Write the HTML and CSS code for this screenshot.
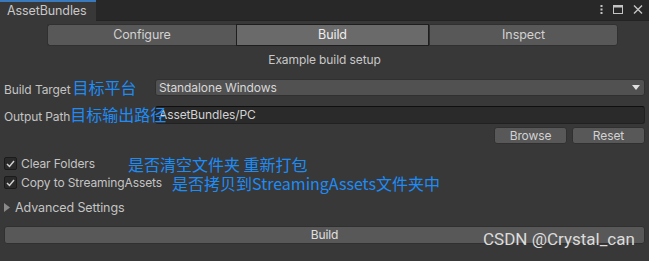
FILE: index.html
```html
<!doctype html>
<html lang="zh-CN">
<head>
	<meta charset="UTF-8">
	<title>AssetBundles</title>
	<link rel="stylesheet" href="styles.css">
</head>
<body>
	<div class="tabbar">
		<div class="tab">AssetBundles</div>
		<div class="winicons">
			<svg width="3" height="9" viewBox="0 0 3 9"><rect x="0.5" y="0" width="2" height="2" fill="#c4c4c4"/><rect x="0.5" y="3.5" width="2" height="2" fill="#c4c4c4"/><rect x="0.5" y="7" width="2" height="2" fill="#c4c4c4"/></svg>
			<svg width="10" height="9" viewBox="0 0 10 9"><rect x="0.5" y="0.5" width="9" height="8" fill="none" stroke="#c4c4c4"/><rect x="0.5" y="0.5" width="9" height="2" fill="#c4c4c4"/></svg>
			<svg width="10" height="9" viewBox="0 0 10 9"><path d="M1 0.5 L9 8.5 M9 0.5 L1 8.5" stroke="#c4c4c4" stroke-width="1.4"/></svg>
		</div>
	</div>

	<div class="panel">
		<div class="toolbar">
			<div class="seg seg-configure">Configure</div>
			<div class="seg seg-build on">Build</div>
			<div class="seg seg-inspect">Inspect</div>
		</div>

		<div class="subtitle">Example build setup</div>

		<div class="row row-target">
			<div class="label">Build Target<span class="note">目标平台</span></div>
			<div class="dropdown">
				Standalone Windows
				<svg class="arrow" width="8" height="5" viewBox="0 0 8 5"><path d="M0 0 H8 L4 5 Z" fill="#e0e0e0"/></svg>
			</div>
		</div>

		<div class="row row-path">
			<div class="label">Output Path<span class="note">目标输出路径</span></div>
			<div class="field">AssetBundles/PC</div>
		</div>

		<div class="row row-btns">
			<div class="btn">Browse</div>
			<div class="btn">Reset</div>
		</div>

		<div class="check first">
			<span class="box"><svg width="9" height="8" viewBox="0 0 9 8"><path d="M1 4 L3.5 6.5 L8 1" fill="none" stroke="#d0d0d0" stroke-width="1.5"/></svg></span>
			<span class="check-label">Clear Folders</span>
			<span class="note note-clear">是否清空文件夹 重新打包</span>
		</div>
		<div class="check">
			<span class="box"><svg width="9" height="8" viewBox="0 0 9 8"><path d="M1 4 L3.5 6.5 L8 1" fill="none" stroke="#d0d0d0" stroke-width="1.5"/></svg></span>
			<span class="check-label">Copy to StreamingAssets</span>
			<span class="note note-copy">是否拷贝到StreamingAssets文件夹中</span>
		</div>

		<div class="foldout">
			<svg width="6" height="9" viewBox="0 0 6 9"><path d="M0 0 L6 4.5 L0 9 Z" fill="#8a8a8a"/></svg>
			<span>Advanced Settings</span>
		</div>

		<div class="bigbtn">Build</div>
	</div>

	<div class="watermark">CSDN @Crystal_can</div>
</body>
</html>
```

FILE: styles.css
```css
*{margin:0;padding:0;box-sizing:border-box;}
body{
	width:649px;
	height:261px;
	overflow:hidden;
	background:#383838;
	color:#c4c4c4;
	font-family:Inter,"Noto Sans CJK SC",sans-serif;
	font-size:12px;
	letter-spacing:-0.1px;
	position:relative;
}

/* 顶部标签栏 */
.tabbar{
	display:flex;
	height:21px;
	background:#282828;
	border-bottom:1px solid #232323;
}
.tab{
	width:96px;
	height:21px;
	background:#383838;
	border-top:2px solid #3a79bb;
	padding-left:7px;
	line-height:18px;
	font-size:12.5px;
	color:#c8c8c8;
}
.winicons{
	margin-left:auto;
	display:flex;
	align-items:center;
	gap:10px;
	padding-right:6px;
	padding-bottom:2px;
}

.panel{padding:0 4px;}

/* 分段按钮 */
.toolbar{
	display:flex;
	height:22px;
	margin:3px 0 0 43px;
	width:571px;
}
.seg{
	background:#585858;
	border:1px solid #303030;
	border-right:none;
	text-align:center;
	line-height:20px;
	font-size:12.5px;
	color:#d2d2d2;
}
.seg-configure{width:189px;border-radius:3px 0 0 3px;}
.seg-build{width:193px;}
.seg-inspect{width:189px;border-right:1px solid #303030;border-radius:0 3px 3px 0;}
.seg.on{background:#6a6a6a;border-color:#1e1e1e;border-right:1px solid #1e1e1e;color:#eee;}

.subtitle{
	margin-top:7px;
	text-align:center;
	line-height:14px;
	color:#c8c8c8;
}

.row{display:flex;align-items:center;}
.label{
	width:151px;
	flex:none;
	white-space:nowrap;
	position:relative;
	z-index:1;
}
.note{
	color:#1e8cf5;
	font-family:"Noto Sans CJK SC",sans-serif;
	font-size:16px;
	line-height:16px;
	letter-spacing:0;
	margin-left:2px;
}
.row-target{margin-top:12px;height:17px;}
.row-path{margin-top:10px;height:18px;}
.row-path .note{margin-left:0;}

.dropdown{
	flex:1;
	height:17px;
	background:#515151;
	border:1px solid #303030;
	border-radius:3px;
	padding-left:3px;
	line-height:15px;
	color:#d8d8d8;
	display:flex;
	align-items:center;
}
.dropdown .arrow{margin-left:auto;margin-right:4px;}
.field{
	flex:1;
	height:18px;
	background:#2a2a2a;
	border:1px solid #212121;
	border-top-color:#0f0f0f;
	border-radius:3px;
	padding-left:3px;
	line-height:16px;
	color:#d2d2d2;
}

.row-btns{
	margin-top:3px;
	justify-content:flex-end;
	gap:5px;
}
.btn{
	width:73px;
	height:17px;
	background:#585858;
	border:1px solid #303030;
	border-radius:3px;
	text-align:center;
	line-height:15px;
	color:#d2d2d2;
}

/* 复选框 */
.check{
	display:flex;
	align-items:center;
	height:19px;
}
.check.first{margin-top:10px;}
.box{
	width:13px;
	height:13px;
	background:#2a2a2a;
	border:1px solid #1b1b1b;
	border-radius:2px;
	display:flex;
	align-items:center;
	justify-content:center;
	margin-right:4px;
}
.note-clear{margin-left:33px;}
.note-copy{margin-left:10px;}

.foldout{
	margin-top:7px;
	height:16px;
	display:flex;
	align-items:center;
	gap:5px;
	font-size:12.5px;
}

.bigbtn{
	margin-top:11px;
	height:18px;
	background:#585858;
	border:1px solid #303030;
	border-radius:3px;
	text-align:center;
	line-height:16px;
	color:#e0e0e0;
}

.watermark{
	position:absolute;
	left:483px;
	top:229px;
	font-family:Roboto,sans-serif;
	font-size:17px;
	color:#dcdcdc;
	letter-spacing:0;
}
```
